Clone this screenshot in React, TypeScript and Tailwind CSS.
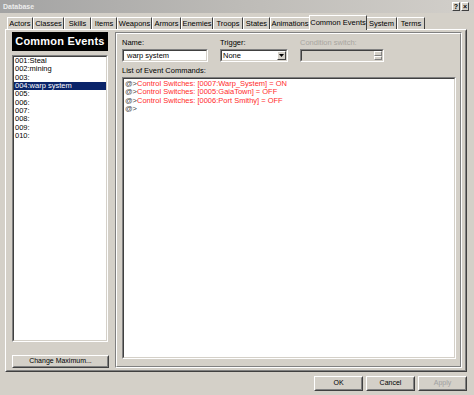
import React from "react";

const F = { fontFamily: '"Liberation Sans", Arial, sans-serif' };

function Sunken({ className = "", children }: { className?: string; children?: React.ReactNode }) {
  return (
    <div className={`border border-t-[#808080] border-l-[#808080] border-b-white border-r-white ${className}`}>
      <div className="h-full w-full border border-t-[#404040] border-l-[#404040] border-b-[#d4d0c8] border-r-[#d4d0c8] bg-white overflow-hidden">
        {children}
      </div>
    </div>
  );
}

function Btn({ label, className = "", disabled = false }: { label: string; className?: string; disabled?: boolean }) {
  return (
    <div className={`border border-t-white border-l-white border-b-[#404040] border-r-[#404040] ${className}`}>
      <div className={`h-full w-full border border-t-[#d4d0c8] border-l-[#d4d0c8] border-b-[#808080] border-r-[#808080] flex items-center justify-center text-[7px] ${disabled ? "text-[#a0a0a0]" : "text-black"}`}>
        {label}
      </div>
    </div>
  );
}

const tabs = ["Actors", "Classes", "Skills", "Items", "Weapons", "Armors", "Enemies", "Troops", "States", "Animations", "Common Events", "System", "Terms"];
const tabW = [26, 31, 27, 26, 35, 29, 32, 30, 27, 40, 58, 31, 28];
const items = ["001:Steal", "002:mining", "003:", "004:warp system", "005:", "006:", "007:", "008:", "009:", "010:"];
const cmds = [
  "Control Switches: [0007:Warp_System] = ON",
  "Control Switches: [0005:GaiaTown] = OFF",
  "Control Switches: [0006:Port Smithy] = OFF",
];

export default function App() {
  return (
    <div className="w-[474px] h-[395px] bg-[#d4d0c8] flex flex-col overflow-hidden" style={F}>
      {/* title bar */}
      <div className="h-[13px] flex items-center justify-between px-[3px] bg-gradient-to-r from-[#a3a3a3] via-[#bdbbb7] to-[#d2cfca]">
        <span className="text-[7px] font-bold text-[#ececec] leading-none">Database</span>
        <div className="flex gap-[1px] mr-[2px]">
          <div className="w-[8px] h-[9px] bg-[#d4d0c8] border border-t-white border-l-white border-b-[#404040] border-r-[#404040] flex items-center justify-center text-[7px] font-bold leading-none">?</div>
          <div className="w-[8px] h-[9px] bg-[#d4d0c8] border border-t-white border-l-white border-b-[#404040] border-r-[#404040] flex items-center justify-center text-[7px] font-bold leading-none">×</div>
        </div>
      </div>

      {/* tabs */}
      <div className="mt-[2px] pl-[7px] flex items-end h-[14px]">
        {tabs.map((t, i) => {
          const sel = t === "Common Events";
          return (
            <div
              key={t}
              style={{ width: tabW[i] }}
              className={`flex items-center justify-center whitespace-nowrap text-[7.5px] leading-none border-l border-t border-t-white border-l-white border-r border-r-[#404040] bg-[#d4d0c8] ${sel ? "h-[15px] -mx-[1px] relative z-10 mb-[-1px]" : "h-[12px]"}`}
            >
              {t}
            </div>
          );
        })}
      </div>

      {/* main panel */}
      <div className="mx-[5px] w-[462px] h-[343px] border border-t-white border-l-white border-b-[#404040] border-r-[#404040]">
        <div className="h-full w-full border border-t-[#d4d0c8] border-l-[#d4d0c8] border-b-[#808080] border-r-[#808080] flex gap-[7px] pl-[5px] pt-[1px]">
          {/* left column */}
          <div className="w-[96px] flex flex-col">
            <div className="h-[19px] bg-black flex items-center justify-center text-white font-bold text-[11px] tracking-[0.2px]">Common Events</div>
            <Sunken className="mt-[4px] h-[287px]">
              <div className="text-[7.5px] leading-[8.33px]">
                {items.map((it) => (
                  <div key={it} className={`pl-[1px] h-[8.33px] ${it.startsWith("004") ? "bg-[#0a246a] text-white" : "text-black"}`}>
                    {it}
                  </div>
                ))}
              </div>
            </Sunken>
            <Btn label="Change Maximum..." className="mt-[13px] h-[13px] w-[97px]" />
          </div>

          {/* right group */}
          <div className="w-[347px] h-[336px] border border-t-[#808080] border-l-[#808080] border-b-white border-r-white">
            <div className="h-full w-full border border-t-white border-l-white border-b-[#808080] border-r-[#808080] pl-[5px] pr-[4px] pt-[5px] flex flex-col">
              <div className="flex gap-[12px]">
                <div className="flex flex-col gap-[2px] w-[86px]">
                  <span className="text-[7.5px] leading-[8px]">Name:</span>
                  <Sunken className="h-[13px]">
                    <div className="pl-[3px] text-[7.5px] leading-[10px]">warp system</div>
                  </Sunken>
                </div>
                <div className="flex flex-col gap-[2px] w-[68px]">
                  <span className="text-[7.5px] leading-[8px]">Trigger:</span>
                  <Sunken className="h-[13px]">
                    <div className="flex h-full">
                      <div className="flex-1 pl-[1px] text-[7.5px] leading-[10px]">None</div>
                      <div className="w-[9px] h-full bg-[#d4d0c8] border border-t-white border-l-white border-b-[#404040] border-r-[#404040] flex items-center justify-center">
                        <svg width="5" height="3" viewBox="0 0 5 3"><path d="M0 0h5L2.5 3z" fill="#000" /></svg>
                      </div>
                    </div>
                  </Sunken>
                </div>
                <div className="flex flex-col gap-[2px] w-[84px]">
                  <span className="text-[7.5px] leading-[8px] text-[#a8a59f]">Condition switch:</span>
                  <div className="h-[13px] border border-t-[#808080] border-l-[#808080] border-b-white border-r-white">
                    <div className="h-full w-full border border-t-[#404040] border-l-[#404040] border-b-[#d4d0c8] border-r-[#d4d0c8] bg-[#d4d0c8] flex justify-end">
                      <div className="w-[8px] h-full flex flex-col">
                        <div className="flex-1 border border-t-white border-l-white border-b-[#808080] border-r-[#808080]" />
                        <div className="flex-1 border border-t-white border-l-white border-b-[#808080] border-r-[#808080]" />
                      </div>
                    </div>
                  </div>
                </div>
              </div>
              <span className="mt-[5px] text-[7.5px] leading-[8px]">List of Event Commands:</span>
              <Sunken className="mt-[2px] h-[282px] w-[334px]">
                <div className="pl-[1px] pt-[1px] text-[7.5px] leading-[8.33px]">
                  {cmds.map((c) => (
                    <div key={c} className="h-[8.33px] whitespace-nowrap">
                      <span className="text-[#404040]">@&gt;</span>
                      <span className="text-[#ff2b2b]">{c}</span>
                    </div>
                  ))}
                  <div className="h-[8.33px] text-[#404040]">@&gt;</div>
                </div>
              </Sunken>
            </div>
          </div>
        </div>
      </div>

      {/* bottom buttons */}
      <div className="flex justify-end gap-[3px] pr-[7px] mt-[4px]">
        <Btn label="OK" className="w-[49px] h-[15px]" />
        <Btn label="Cancel" className="w-[49px] h-[15px]" />
        <Btn label="Apply" className="w-[49px] h-[15px]" disabled />
      </div>
    </div>
  );
}
